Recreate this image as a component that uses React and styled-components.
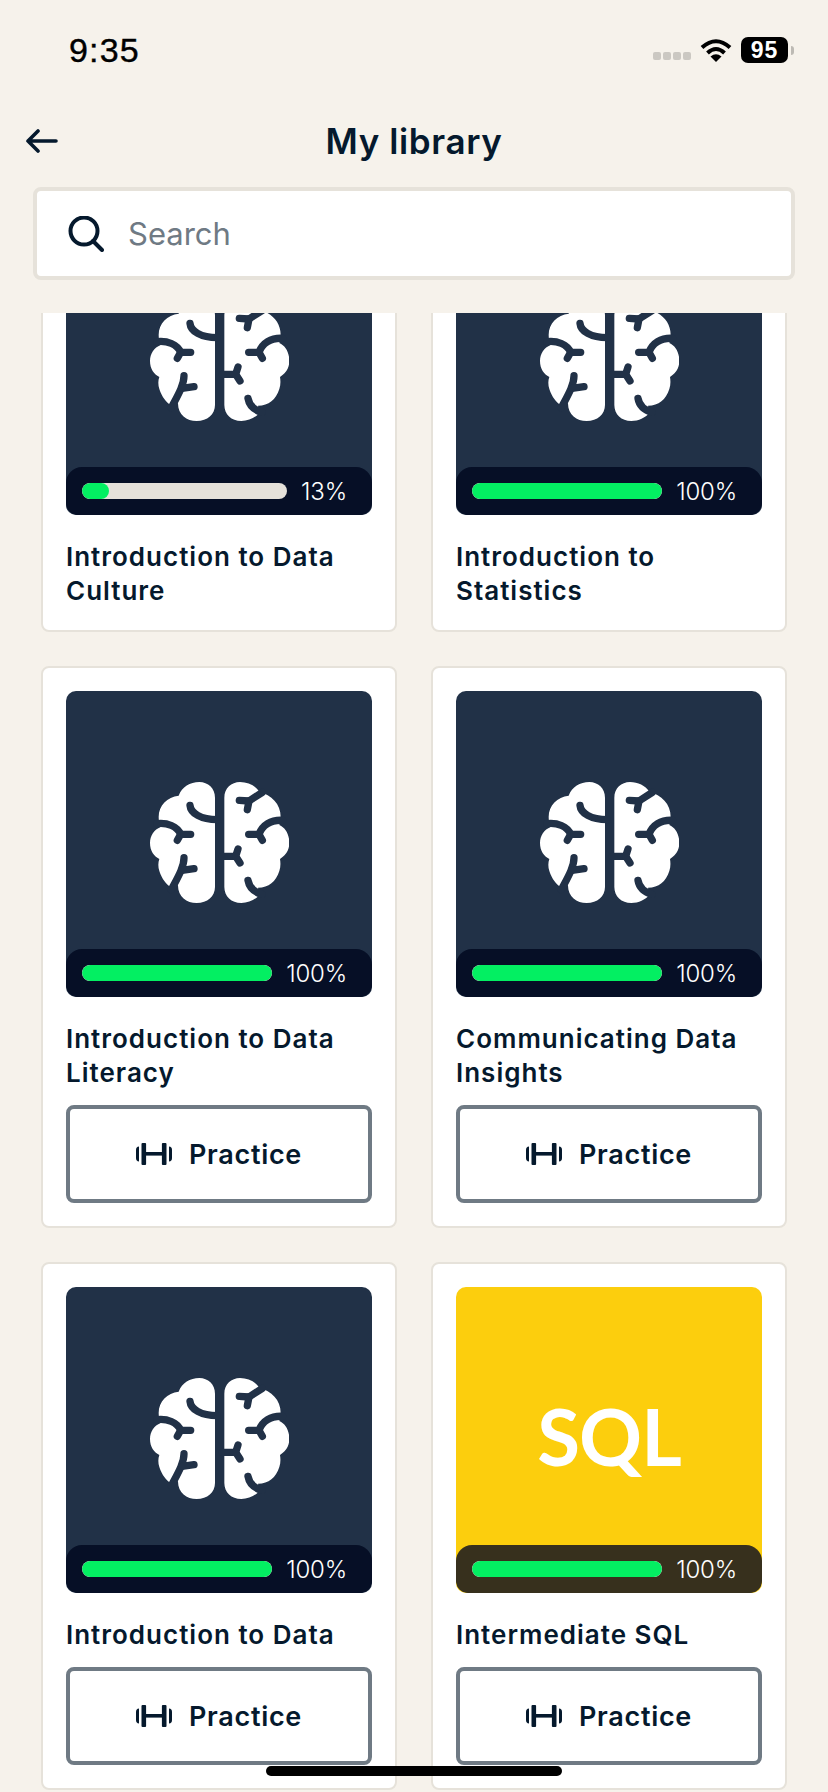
import React from "react";
import styled, { createGlobalStyle } from "styled-components";

const colors = {
  page: "#f6f2eb",
  ink: "#05192d",
  navy: "#213147",
  yellow: "#fcce0d",
  green: "#03ef62",
  line: "#e6e2da",
  track: "#e5e1da",
  steel: "#6f7a84",
};

const courses = [
  { id: 1, title: "Introduction to Data Culture", progress: 13 },
  { id: 2, title: "Introduction to Statistics", progress: 100 },
  { id: 3, title: "Introduction to Data Literacy", progress: 100, practice: true },
  { id: 4, title: "Communicating Data Insights", progress: 100, practice: true },
  { id: 5, title: "Introduction to Data", progress: 100, practice: true },
  { id: 6, title: "Intermediate SQL", progress: 100, practice: true, sql: true },
];

const GlobalStyle = createGlobalStyle`
  html, body {
    margin: 0;
    padding: 0;
    background: ${colors.page};
  }
  * {
    box-sizing: border-box;
  }
`;

const Screen = styled.div`
  position: relative;
  display: flex;
  flex-direction: column;
  width: 828px;
  height: 1792px;
  overflow: hidden;
  background: ${colors.page};
  color: ${colors.ink};
  font-family: "Inter", "Open Sans", sans-serif;
`;

const StatusBar = styled.div`
  display: flex;
  flex: none;
  align-items: center;
  justify-content: space-between;
  height: 100px;
  padding: 0 40px 0 69px;
`;

const Clock = styled.span`
  color: #000;
  font-family: "Liberation Sans", sans-serif;
  font-size: 34px;
  letter-spacing: 1.2px;
  -webkit-text-stroke: 0.4px #000;
`;

const StatusIcons = styled.div`
  display: flex;
  align-items: center;
`;

const SignalDots = styled.div`
  display: flex;
  gap: 2px;
  margin: 12px 9px 0 0;
`;

const SignalDot = styled.span`
  width: 8px;
  height: 8px;
  border-radius: 2px;
  background: #cbc8c2;
`;

const Battery = styled.div`
  position: relative;
  width: 47px;
  height: 26px;
  margin-left: 9px;
  border-radius: 7px;
  background: #000;
  color: #fff;
  font-family: "Liberation Sans", sans-serif;
  font-size: 23px;
  font-weight: 700;
  letter-spacing: 1px;
  line-height: 26px;
  text-align: center;

  &::after {
    content: "";
    position: absolute;
    top: 9px;
    right: -6px;
    width: 3px;
    height: 9px;
    border-radius: 0 3px 3px 0;
    background: #bdbab4;
  }
`;

const NavBar = styled.div`
  display: grid;
  flex: none;
  grid-template-columns: 1fr auto 1fr;
  align-items: center;
  height: 82px;
  padding: 0 25px;
`;

const NavTitle = styled.h1`
  margin: 0;
  font-size: 35px;
  font-weight: 600;
  letter-spacing: 0.6px;
`;

const SearchBox = styled.div`
  display: flex;
  flex: none;
  align-items: center;
  gap: 24px;
  height: 93px;
  margin: 5px 33px 0;
  padding-left: 31px;
  border: 4px solid ${colors.line};
  border-radius: 8px;
  background: #fff;
`;

const SearchHint = styled.span`
  color: #6f7a84;
  font-size: 31px;
`;

const Scroller = styled.div`
  flex: 1;
  margin-top: 33px;
  overflow: hidden;
`;

const CourseGrid = styled.div`
  display: grid;
  grid-template-columns: 356px 356px;
  gap: 34px;
  margin-top: -129px;
  padding: 0 41px;
`;

const Card = styled.div`
  display: flex;
  flex-direction: column;
  padding: 23px;
  border: 2px solid ${colors.line};
  border-radius: 8px;
  background: #fff;
`;

const Thumb = styled.div`
  position: relative;
  display: flex;
  flex: none;
  align-items: center;
  justify-content: center;
  height: 306px;
  padding-bottom: 4px;
  border-radius: 10px;
  overflow: hidden;
  background: ${(p) => (p.$sql ? colors.yellow : colors.navy)};
`;

const SqlMark = styled.span`
  margin-top: -4px;
  color: #fff;
  font-family: "Lato", sans-serif;
  font-size: 78px;
  font-weight: 700;
  letter-spacing: -1px;
`;

const ProgressStrip = styled.div`
  position: absolute;
  right: 0;
  bottom: 0;
  left: 0;
  display: flex;
  align-items: center;
  gap: 14px;
  height: 48px;
  padding: 0 25px 0 16px;
  border-radius: 16px 16px 12px 12px;
  background: ${(p) => (p.$sql ? "#37301d" : "#060f26")};
`;

const Track = styled.div`
  flex: 1;
  height: 16px;
  border-radius: 8px;
  overflow: hidden;
  background: ${colors.track};
`;

const Fill = styled.div`
  height: 100%;
  border-radius: 8px;
  background: ${colors.green};
`;

const Percent = styled.span`
  color: #fff;
  font-size: 24px;
  font-weight: 300;
  letter-spacing: -0.2px;
`;

const CourseTitle = styled.div`
  margin: 25px 0 -1px;
  font-size: 26px;
  font-weight: 590;
  letter-spacing: 1px;
  line-height: 34px;
  min-height: ${(p) => (p.$single ? 34 : 68)}px;
`;

const PracticeButton = styled.button`
  display: flex;
  flex: none;
  align-items: center;
  justify-content: center;
  gap: 17px;
  height: 98px;
  margin-top: 16px;
  padding: 0;
  border: 4px solid ${colors.steel};
  border-radius: 8px;
  background: #fff;
  color: ${colors.ink};
  font-family: inherit;
  font-size: 27px;
  font-weight: 590;
  letter-spacing: 0.7px;
`;

const HomeIndicator = styled.div`
  position: absolute;
  bottom: 16px;
  left: 266px;
  width: 296px;
  height: 10px;
  border-radius: 5px;
  background: #000;
`;

const WifiIcon = () => (
  <svg width="32" height="24" viewBox="0 0 32 24" fill="none" stroke="#000" strokeWidth="4">
    <path d="M2 9.5Q16 -3 30 9.5" />
    <path d="M7.5 15Q16 7 24.5 15" />
    <path d="M10.5 18.5Q16 14 21.5 18.5L16 24Z" fill="#000" stroke="none" />
  </svg>
);

const BackIcon = () => (
  <svg width="33" height="24" viewBox="0 0 33 24" fill="none" stroke={colors.ink} strokeWidth="3.6" strokeLinecap="round" strokeLinejoin="round">
    <path d="M31 12H3M13 2L3 12L13 22" />
  </svg>
);

const SearchIcon = () => (
  <svg width="36" height="36" viewBox="0 0 36 36" fill="none" stroke={colors.ink} strokeWidth="4" strokeLinecap="round">
    <circle cx="16" cy="15" r="13.5" />
    <path d="M25 25L34 34" />
  </svg>
);

const DumbbellIcon = () => (
  <svg width="36" height="22" viewBox="0 0 36 22" fill={colors.ink}>
    <path d="M3 3.5C1 3.5 0 5 0 7V15C0 17 1 18.5 3 18.5Z" />
    <rect x="5.5" y="0" width="4.6" height="22" rx="1" />
    <rect x="10" y="9" width="16" height="3.6" />
    <rect x="25.9" y="0" width="4.6" height="22" rx="1" />
    <path d="M33 3.5C35 3.5 36 5 36 7V15C36 17 35 18.5 33 18.5Z" />
  </svg>
);

// traced from the thumbnail, the dark strokes are the folds
const BrainIcon = () => (
  <svg width="139" height="121" viewBox="88 65 417 363" fill="none">
    <g fill="#fff">
      <path d="M283 112C283 84 262 65 236 65C208 65 184 80 174 106C140 110 114 134 114 170C114 182 116 192 120 200C100 208 88 226 88 248C88 272 100 288 116 296C112 306 112 320 116 332C124 356 136 372 152 382C160 368 168 368 172 376C172 408 198 428 228 428C260 428 283 408 283 380Z" />
      <path d="M311 112C311 84 332 65 358 65C382 65 404 76 416 94C452 104 480 130 480 170C480 180 478 188 476 194C494 202 506 222 506 248C506 270 494 286 478 296C480 308 480 320 476 332C466 364 444 382 412 382L416 404C404 418 384 428 362 428C332 428 311 408 311 380Z" />
    </g>
    <g stroke={colors.navy} strokeWidth="22" strokeLinecap="round" strokeLinejoin="round">
      <path d="M208 135C210 158 240 178 290 178" />
      <path d="M108 190C140 186 170 198 180 222" />
      <path d="M170 240L180 222H210" />
      <path d="M190 292C190 320 172 350 152 388" />
      <path d="M184 330L220 325" />
      <path d="M356 120L385 122L425 96" />
      <path d="M380 148L385 122" />
      <path d="M486 180C450 178 425 195 415 222" />
      <path d="M384 222H415L425 240" />
      <path d="M305 288H345" />
      <path d="M352 266L345 288L358 308" />
      <path d="M382 360C386 384 404 396 424 402" />
    </g>
  </svg>
);

function CourseCard({ course }) {
  return (
    <Card>
      <Thumb $sql={course.sql}>
        {course.sql ? <SqlMark>SQL</SqlMark> : <BrainIcon />}
        <ProgressStrip $sql={course.sql}>
          <Track>
            <Fill style={{ width: `${course.progress}%` }} />
          </Track>
          <Percent>{course.progress}%</Percent>
        </ProgressStrip>
      </Thumb>
      <CourseTitle $single={course.id > 4}>{course.title}</CourseTitle>
      {course.practice && (
        <PracticeButton>
          <DumbbellIcon />
          Practice
        </PracticeButton>
      )}
    </Card>
  );
}

export default function App() {
  return (
    <Screen>
      <GlobalStyle />
      <StatusBar>
        <Clock>9:35</Clock>
        <StatusIcons>
          <SignalDots>
            <SignalDot />
            <SignalDot />
            <SignalDot />
            <SignalDot />
          </SignalDots>
          <WifiIcon />
          <Battery>95</Battery>
        </StatusIcons>
      </StatusBar>
      <NavBar>
        <BackIcon />
        <NavTitle>My library</NavTitle>
      </NavBar>
      <SearchBox>
        <SearchIcon />
        <SearchHint>Search</SearchHint>
      </SearchBox>
      <Scroller>
        <CourseGrid>
          {courses.map((course) => (
            <CourseCard key={course.id} course={course} />
          ))}
        </CourseGrid>
      </Scroller>
      <HomeIndicator />
    </Screen>
  );
}
